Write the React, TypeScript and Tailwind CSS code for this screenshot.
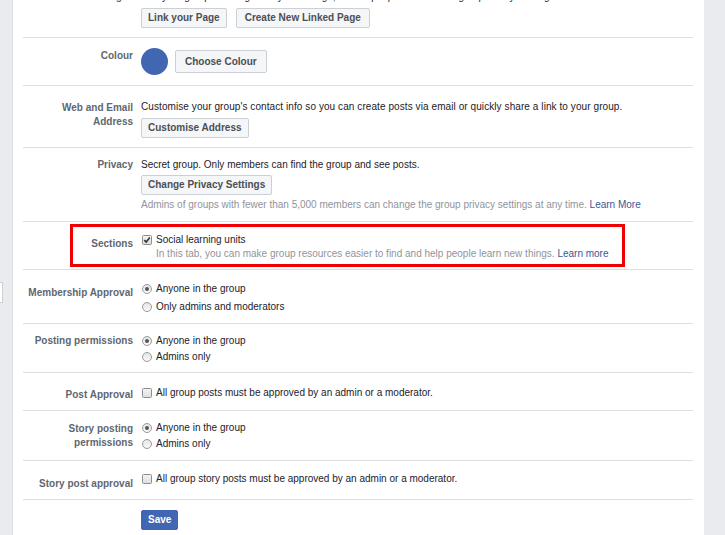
import type { ReactNode } from "react";

interface RowProps {
  label: ReactNode;
  rowClass: string;
  labelClass: string;
  contentClass: string;
  children: ReactNode;
}

function Row({ label, rowClass, labelClass, contentClass, children }: RowProps) {
  return (
    <div className={`flex gap-[8px] border-b border-[#dddfe2] ${rowClass}`}>
      <div className={`w-[110px] shrink-0 text-right font-bold text-[#606770] ${labelClass}`}>
        {label}
      </div>
      <div className={`min-w-0 flex-1 ${contentClass}`}>{children}</div>
    </div>
  );
}

function Button({ children, className = "" }: { children: ReactNode; className?: string }) {
  return (
    <button
      type="button"
      className={`box-border flex h-[20px] items-center rounded-[2px] border border-[#ccd0d5] bg-[#f5f6f7] px-[6px] font-bold text-[#4b4f56] ${className}`}
    >
      {children}
    </button>
  );
}

function Checkbox({ checked = false }: { checked?: boolean }) {
  return (
    <svg width="10" height="10" viewBox="0 0 10 10" className="ml-[1px] shrink-0">
      <defs>
        <linearGradient id="cbg" x1="0" y1="0" x2="0" y2="1">
          <stop offset="0" stopColor="#f4f4f4" />
          <stop offset="1" stopColor="#dedede" />
        </linearGradient>
      </defs>
      <rect x="0.5" y="0.5" width="9" height="9" rx="1" fill="url(#cbg)" stroke="#8e8e8e" />
      {checked ? (
        <path d="M2.3 5.1 L4.2 7 L7.8 2.6" fill="none" stroke="#333" strokeWidth="1.6" />
      ) : null}
    </svg>
  );
}

function Radio({ checked = false }: { checked?: boolean }) {
  return (
    <svg width="10" height="10" viewBox="0 0 10 10" className="ml-[1px] shrink-0">
      <defs>
        <linearGradient id="rbg" x1="0" y1="0" x2="0" y2="1">
          <stop offset="0" stopColor="#e4e4e4" />
          <stop offset="1" stopColor="#fafafa" />
        </linearGradient>
      </defs>
      <circle cx="5" cy="5" r="4.5" fill="url(#rbg)" stroke="#9a9a9a" />
      {checked ? <circle cx="5" cy="5" r="2" fill="#555" /> : null}
    </svg>
  );
}

function Option({ children, control }: { children: ReactNode; control: ReactNode }) {
  return (
    <div className="flex h-[14px] items-center gap-[4px]">
      {control}
      <span className="whitespace-nowrap">{children}</span>
    </div>
  );
}

export default function App() {
  return (
    <div className="flex h-[535px] w-[725px] overflow-hidden bg-[#e9ebee] font-['Liberation_Sans',Arial,sans-serif] text-[10px] leading-[14px] text-[#1d2129]">
      <div className="flex w-[13px] shrink-0 flex-col border-r border-[#dddfe2]">
        <div className="mt-[282px] h-[21px] w-[3px] border border-l-0 border-[#ccd0d5] bg-white" />
      </div>

      <div className="w-[691px] shrink-0 bg-white pl-[10px] pr-[11px]">
        <div className="-mt-[20px]">
          <Row label="Linked Pages" rowClass="pb-[9px]" labelClass="pt-[10px]" contentClass="pt-[10px]">
            <p className="whitespace-nowrap">
              Link your group to a Page that you manage, so that people can find the group from your Page.
            </p>
            <div className="mt-[4px] flex gap-[9px]">
              <Button>Link your Page</Button>
              <Button className="px-[8px]">Create New Linked Page</Button>
            </div>
          </Row>

          <Row label="Colour" rowClass="pb-[10px]" labelClass="pt-[11px]" contentClass="flex items-start gap-[7px] pt-[10px]">
            <div className="h-[27px] w-[27px] rounded-full bg-[#4267b2]" />
            <Button className="mt-[2px] h-[23px] px-[9px]">Choose Colour</Button>
          </Row>

          <Row
            label={
              <>
                Web and Email
                <br />
                Address
              </>
            }
            rowClass="pb-[9px]"
            labelClass="pt-[15px]"
            contentClass="pt-[14px]"
          >
            <p className="whitespace-nowrap tracking-[0.08px]">
              Customise your group's contact info so you can create posts via email or quickly share a link to your group.
            </p>
            <div className="mt-[4px] flex">
              <Button>Customise Address</Button>
            </div>
          </Row>

          <Row label="Privacy" rowClass="pb-[9px]" labelClass="pt-[10px]" contentClass="pt-[10px]">
            <p>Secret group. Only members can find the group and see posts.</p>
            <div className="mt-[3px] flex">
              <Button>Change Privacy Settings</Button>
            </div>
            <p className="mt-[3px] whitespace-nowrap text-[#90949c]">
              Admins of groups with fewer than 5,000 members can change the group privacy settings at any time.{" "}
              <a className="text-[#365899]">Learn More</a>
            </p>
          </Row>

          <div className="relative">
            <Row label="Sections" rowClass="pb-[8px]" labelClass="pt-[15px]" contentClass="pt-[11px]">
              <Option control={<Checkbox checked />}>Social learning units</Option>
              <p className="whitespace-nowrap pl-[15px] text-[#90949c]">
                In this tab, you can make group resources easier to find and help people learn new things.{" "}
                <a className="text-[#365899]">Learn more</a>
              </p>
            </Row>
            <div className="absolute left-[47px] top-[2px] h-[43px] w-[555px] border-[3px] border-[#f00000]" />
          </div>

          <Row label="Membership Approval" rowClass="pb-[9px]" labelClass="pt-[16px]" contentClass="flex flex-col gap-[4px] pt-[12px]">
            <Option control={<Radio checked />}>Anyone in the group</Option>
            <Option control={<Radio />}>Only admins and moderators</Option>
          </Row>

          <Row label="Posting permissions" rowClass="pb-[8px]" labelClass="pt-[10px]" contentClass="flex flex-col gap-[2px] pt-[10px]">
            <Option control={<Radio checked />}>Anyone in the group</Option>
            <Option control={<Radio />}>Admins only</Option>
          </Row>

          <Row label="Post Approval" rowClass="pb-[8px]" labelClass="pt-[15px]" contentClass="pt-[13px]">
            <Option control={<Checkbox />}>All group posts must be approved by an admin or a moderator.</Option>
          </Row>

          <Row
            label={
              <>
                Story posting
                <br />
                permissions
              </>
            }
            rowClass="pb-[9px]"
            labelClass="pt-[11px]"
            contentClass="flex flex-col gap-[2px] pt-[10px]"
          >
            <Option control={<Radio checked />}>Anyone in the group</Option>
            <Option control={<Radio />}>Admins only</Option>
          </Row>

          <Row label="Story post approval" rowClass="pb-[8px]" labelClass="pt-[16px]" contentClass="pt-[11px]">
            <Option control={<Checkbox />}>All group story posts must be approved by an admin or a moderator.</Option>
          </Row>

          <div className="mt-[10px] flex pl-[118px]">
            <button
              type="button"
              className="box-border flex h-[20px] items-center rounded-[2px] border border-[#4267b2] bg-[#4267b2] px-[6px] font-bold text-white"
            >
              Save
            </button>
          </div>
        </div>
      </div>

      <div className="flex-1" />
    </div>
  );
}
